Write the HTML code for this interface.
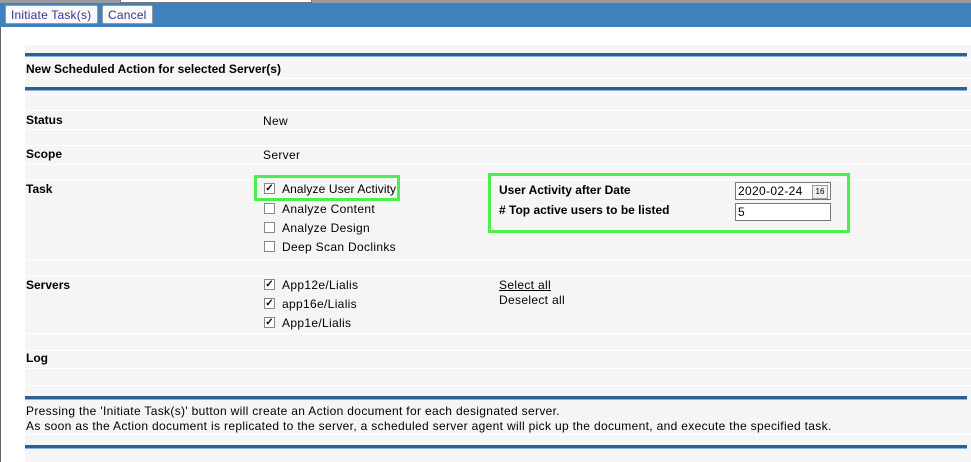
<!DOCTYPE html>
<html><head><style>
body{margin:0;width:971px;height:462px;overflow:hidden;background:#fff;font-family:"Liberation Sans",Arial,sans-serif;font-size:12px;color:#000;position:relative;letter-spacing:0.33px}
.a{position:absolute;white-space:nowrap}
.g{position:absolute;left:25px;right:0;background:#f5f5f5}
.w{position:absolute;left:25px;right:0;height:1px;background:#fff}
.bl{position:absolute;left:25px;width:942px;height:3px;background:#2e5f92;border-bottom:1px solid #8db4dc}
.b{font-weight:bold;letter-spacing:0}
.btn{position:absolute;top:5px;height:19px;background:#fafafa;border:1px solid #999;border-radius:2px;color:#333399;font-size:12px;line-height:19px;padding:0 5px;box-sizing:border-box;white-space:nowrap;letter-spacing:0.2px}
.cb{position:absolute;width:11px;height:11px;border:1px solid #888;background:#fff;box-sizing:border-box;font-size:10px;line-height:9px;text-align:center;font-weight:bold;letter-spacing:0}
.hl{position:absolute;border:3px solid #4cef4c;box-sizing:border-box}
.in{position:absolute;height:18px;border:1px solid #777;background:#fff;box-sizing:border-box;font-size:12px;line-height:16px;padding-left:2px;white-space:nowrap}
</style></head><body>
<div class="a" style="left:0;top:0;width:971px;height:3px;background:#9a9a9a"></div>
<div class="a" style="left:120px;top:0;width:190px;height:2px;background:#fff;border:1px solid #777;border-top:0"></div>
<div class="a" style="left:0;top:3px;width:971px;height:24px;background:#3f80bf"></div>
<div class="btn" style="left:5px;width:93px">Initiate Task(s)</div>
<div class="btn" style="left:102px;width:51px">Cancel</div>
<div class="a" style="left:0;top:27px;width:1px;height:435px;background:#666"></div>
<div class="g" style="top:45px;height:417px"></div>
<div class="bl" style="top:53px"></div>
<div class="w" style="top:60px"></div>
<div class="a b" style="left:26px;top:62px">New Scheduled Action for selected Server(s)</div>
<div class="w" style="top:78px"></div>
<div class="bl" style="top:87px"></div>
<div class="w" style="top:94px"></div>
<div class="w" style="top:110px"></div>
<div class="a b" style="left:26px;top:113px">Status</div>
<div class="a" style="left:263px;top:114px">New</div>
<div class="w" style="top:129px"></div>
<div class="w" style="top:145px"></div>
<div class="a b" style="left:26px;top:147px">Scope</div>
<div class="a" style="left:263px;top:148px">Server</div>
<div class="w" style="top:164px"></div>
<div class="w" style="top:179px"></div>
<div class="a b" style="left:26px;top:182px">Task</div>
<div class="hl" style="left:254px;top:175px;width:146px;height:26px"></div>
<div class="cb" style="left:264px;top:183px">✓</div><div class="a" style="left:282px;top:182px;letter-spacing:0.1px">Analyze User Activity</div>
<div class="cb" style="left:264px;top:203px"></div><div class="a" style="left:282px;top:202px">Analyze Content</div>
<div class="cb" style="left:264px;top:222px"></div><div class="a" style="left:282px;top:221px">Analyze Design</div>
<div class="cb" style="left:264px;top:241px"></div><div class="a" style="left:282px;top:240px">Deep Scan Doclinks</div>
<div class="hl" style="left:488px;top:173px;width:362px;height:60px"></div>
<div class="a b" style="left:499px;top:183px">User Activity after Date</div>
<div class="a b" style="left:499px;top:203px"># Top active users to be listed</div>
<div class="in" style="left:735px;top:182px;width:96px">2020-02-24<span style="position:absolute;right:2px;top:2px;width:14px;height:12px;border:1px solid #999;font-size:8px;line-height:12px;text-align:center;background:#f0f0f0;letter-spacing:0">16</span></div>
<div class="in" style="left:735px;top:203px;width:96px">5</div>
<div class="w" style="top:259px"></div>
<div class="w" style="top:276px"></div>
<div class="a b" style="left:26px;top:278px">Servers</div>
<div class="cb" style="left:264px;top:279px">✓</div><div class="a" style="left:282px;top:278px">App12e/Lialis</div>
<div class="cb" style="left:264px;top:298px">✓</div><div class="a" style="left:282px;top:297px">app16e/Lialis</div>
<div class="cb" style="left:264px;top:317px">✓</div><div class="a" style="left:282px;top:316px">App1e/Lialis</div>
<div class="a" style="left:499px;top:278px;text-decoration:underline">Select all</div>
<div class="a" style="left:499px;top:293px">Deselect all</div>
<div class="w" style="top:333px"></div>
<div class="w" style="top:350px"></div>
<div class="a b" style="left:26px;top:351px">Log</div>
<div class="w" style="top:368px"></div>
<div class="w" style="top:385px"></div>
<div class="bl" style="top:396px"></div>
<div class="a" style="left:26px;top:404px;line-height:15px">Pressing the 'Initiate Task(s)' button will create an Action document for each designated server.<br>As soon as the Action document is replicated to the server, a scheduled server agent will pick up the document, and execute the specified task.</div>
<div class="w" style="top:434px"></div>
<div class="bl" style="top:445px"></div>
</body></html>
